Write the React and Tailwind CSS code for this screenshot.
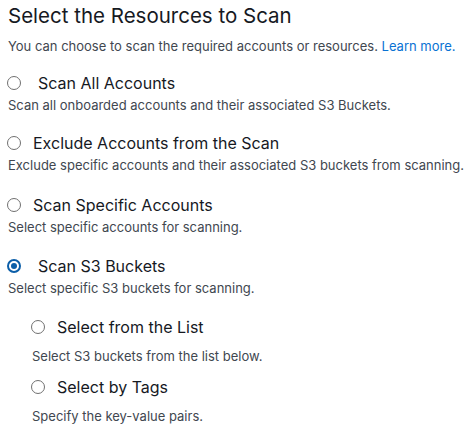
import React from "react";

function Radio({ checked }) {
  return (
    <span
      className={
        "inline-flex h-[14px] w-[14px] shrink-0 items-center justify-center rounded-full border " +
        (checked ? "border-[#0b5ea8] border-[2px]" : "border-[#707070]")
      }
    >
      {checked && <span className="h-[6px] w-[6px] rounded-full bg-[#0b5ea8]" />}
    </span>
  );
}

function Option({ label, desc, checked, labelGap, mt }) {
  return (
    <div className={mt}>
      <div className="flex h-6 items-center">
        <span className="pl-[7px] flex items-center">
          <Radio checked={checked} />
        </span>
        <span className={"text-[16px] leading-6 text-[#16191f] " + labelGap}>{label}</span>
      </div>
      <div className="pl-2 text-[13px] leading-5 text-[#414750]">{desc}</div>
    </div>
  );
}

function SubOption({ label, desc, mt }) {
  return (
    <div className={mt}>
      <div className="flex h-6 items-center pl-[31px]">
        <Radio />
        <span className="ml-[12px] text-[16px] leading-6 text-[#16191f]">{label}</span>
      </div>
      <div className="mt-[7px] pl-[32px] text-[13px] leading-5 text-[#414750]">{desc}</div>
    </div>
  );
}

export default function App() {
  return (
    <div
      className="h-[432px] w-[470px] overflow-hidden bg-white"
      style={{ fontFamily: "Inter, 'Noto Sans', sans-serif" }}
    >
      <div className="pt-[4px] pl-2 text-[20.5px] leading-6 text-[#16191f]">
        Select the Resources to Scan
      </div>
      <div className="mt-[8px] pl-2 text-[13px] leading-5 text-[#414750]">
        You can choose to scan the required accounts or resources.{" "}
        <span className="text-[#0972d3]">Learn more.</span>
      </div>
      <Option
        mt="mt-[15px]"
        label="Scan All Accounts"
        desc="Scan all onboarded accounts and their associated S3 Buckets."
        labelGap="ml-[17px]"
      />
      <Option
        mt="mt-[16px]"
        label="Exclude Accounts from the Scan"
        desc="Exclude specific accounts and their associated S3 buckets from scanning."
        labelGap="ml-[12px]"
      />
      <Option
        mt="mt-[18px]"
        label="Scan Specific Accounts"
        desc="Select specific accounts for scanning."
        labelGap="ml-[12px]"
      />
      <Option
        mt="mt-[17px]"
        checked
        label="Scan S3 Buckets"
        desc="Select specific S3 buckets for scanning."
        labelGap="ml-[17px]"
      />
      <SubOption
        mt="mt-[17px]"
        label="Select from the List"
        desc="Select S3 buckets from the list below."
      />
      <SubOption
        mt="mt-[9px]"
        label="Select by Tags"
        desc="Specify the key-value pairs."
      />
    </div>
  );
}
